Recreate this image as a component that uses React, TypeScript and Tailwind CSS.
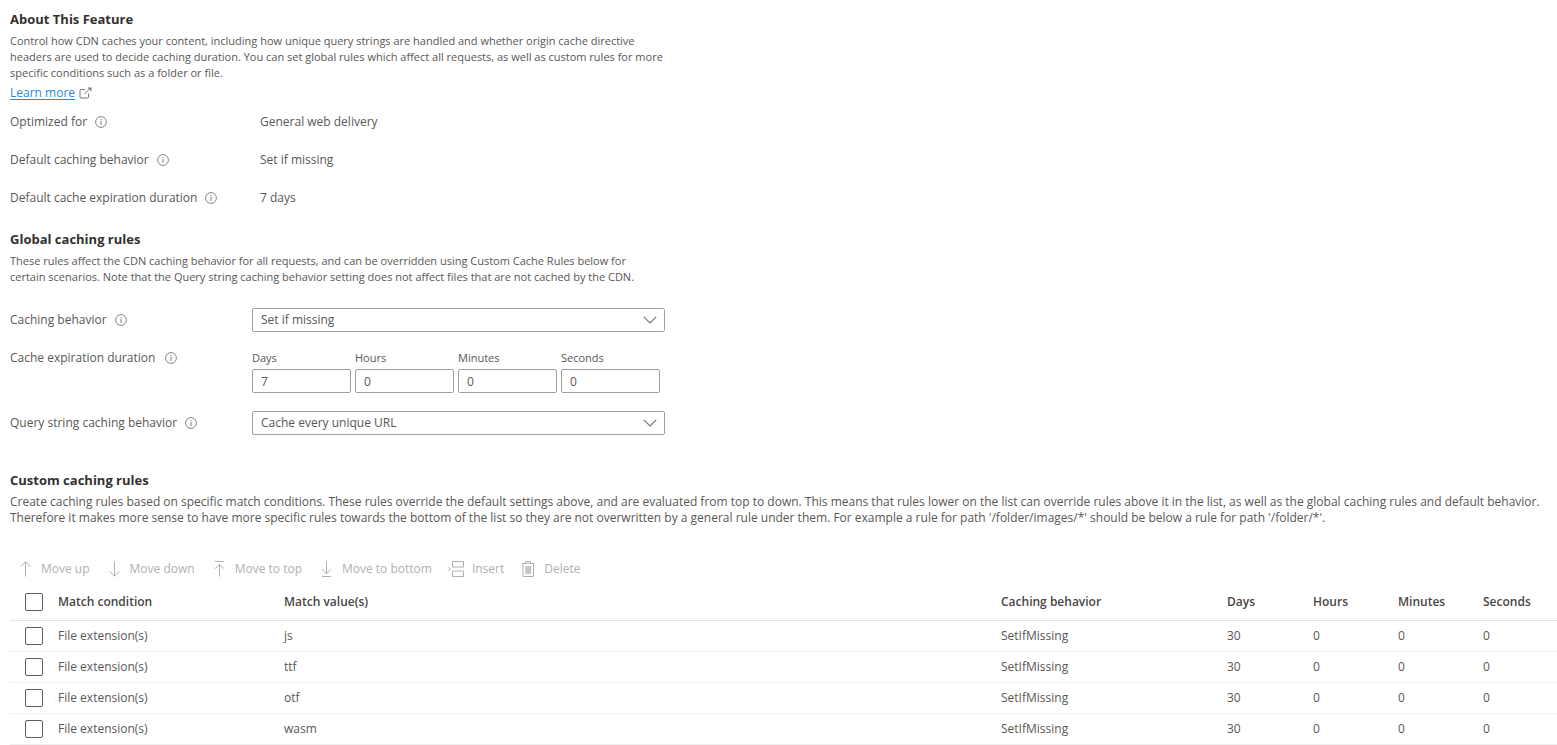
import { useState } from 'react';
import type { ReactNode } from 'react';

const INFO_ROWS = [
  { label: 'Optimized for', value: 'General web delivery' },
  { label: 'Default caching behavior', value: 'Set if missing' },
  { label: 'Default cache expiration duration', value: '7 days' },
];

const RULES = ['js', 'ttf', 'otf', 'wasm'].map((value) => ({
  condition: 'File extension(s)',
  value,
  behavior: 'SetIfMissing',
  days: 30,
  hours: 0,
  minutes: 0,
  seconds: 0,
}));

const DURATION = [
  { id: 'days', label: 'Days', value: '7' },
  { id: 'hours', label: 'Hours', value: '0' },
  { id: 'minutes', label: 'Minutes', value: '0' },
  { id: 'seconds', label: 'Seconds', value: '0' },
];

const ACTIONS = [
  { label: 'Move up', icon: <path d="M8.5 15.5V.8M3.5 5.8l5-5 5 5" /> },
  { label: 'Move down', icon: <path d="M8.5 .5v14.7M3.5 10.2l5 5 5-5" /> },
  { label: 'Move to top', icon: <path d="M4 .5h9M8.5 15.5V3.3M4 7.8l4.5-4.5L13 7.8" /> },
  { label: 'Move to bottom', icon: <path d="M4 15.5h9M8.5 .5v12.2M4 8.2l4.5 4.500L13 8.2" /> },
  { label: 'Insert', icon: <path d="M4.500 .5h11v5.500h-11zM4.500 10h11v5.500h-11zM.5 6l2 2-2 2" /> },
  {
    label: 'Delete',
    icon: (
      <>
        <path d="M2 2.5h12.500M5.500 2.500v-2h5v2M3 2.500v13h10.500v-13" />
        <path d="M5.500 5h5.500v8h-5.500z" fill="#d2d0ce" stroke="none" />
        <path d="M6 5v8M8.250 5v8M10.500 5v8" strokeWidth=".7" />
      </>
    ),
  },
];

export default function App() {
  return (
    <main className="min-h-screen bg-white pt-[9px] pl-[10px] font-['Open_Sans',sans-serif] text-[12px] leading-4 text-[#595755]">
      <section>
        <Heading>About This Feature</Heading>
        <p className="mt-1 max-w-[660px] text-[11px] leading-4">
          Control how CDN caches your content, including how unique query strings are handled and whether origin cache directive headers are used to decide caching duration. You can set global rules which affect all requests, as well as custom rules for more specific conditions such as a folder or file.
        </p>
        <a href="#learn-more" className="mt-0.5 flex h-5 w-fit items-center gap-1 text-[#2b88d8]">
          <span className="underline underline-offset-2">Learn more</span>
          <ExternalIcon />
        </a>
        <dl>
          {INFO_ROWS.map((row) => (
            <div key={row.label} className="flex h-[38px] items-center">
              <dt className="flex w-[250px] items-center gap-2">
                {row.label}
                <InfoIcon />
              </dt>
              <dd>{row.value}</dd>
            </div>
          ))}
        </dl>
      </section>

      <section className="mt-3">
        <Heading>Global caching rules</Heading>
        <p className="mt-1 max-w-[650px] text-[11px] leading-4">
          These rules affect the CDN caching behavior for all requests, and can be overridden using Custom Cache Rules below for certain scenarios. Note that the Query string caching behavior setting does not affect files that are not cached by the CDN.
        </p>
        <div className="mt-4 flex h-[38px] items-center">
          <FieldLabel htmlFor="caching-behavior">Caching behavior</FieldLabel>
          <SelectBox id="caching-behavior" options={['Set if missing', 'Bypass cache', 'Override']} />
        </div>
        <fieldset className="flex pb-[11px]">
          <div className="flex h-[38px] w-[242px] shrink-0 items-center gap-[10px]">
            <span>Cache expiration duration</span>
            <InfoIcon />
          </div>
          <div className="flex gap-1 pt-[9px]">
            {DURATION.map((d) => (
              <div key={d.id} className="flex w-[99px] flex-col">
                <label htmlFor={d.id} className="h-5 text-[11px] leading-5">{d.label}</label>
                <input
                  id={d.id}
                  type="text"
                  defaultValue={d.value}
                  className="mt-px h-6 w-full rounded-xs border border-[#a19f9d] px-2 outline-none"
                />
              </div>
            ))}
          </div>
        </fieldset>
        <div className="flex h-[38px] items-center">
          <FieldLabel htmlFor="query-behavior">Query string caching behavior</FieldLabel>
          <SelectBox id="query-behavior" options={['Cache every unique URL', 'Ignore query strings', 'Bypass caching for query strings']} />
        </div>
      </section>

      <section className="mt-7">
        <Heading>Custom caching rules</Heading>
        <p className="mt-1">
          Create caching rules based on specific match conditions. These rules override the default settings above, and are evaluated from top to down. This means that rules lower on the list can override rules above it in the list, as well as the global caching rules and default behavior. Therefore it makes more sense to have more specific rules towards the bottom of the list so they are not overwritten by a general rule under them. For example a rule for path '/folder/images/*' should be below a rule for path '/folder/*'.
        </p>
        <div role="toolbar" aria-label="Rule actions" className="mt-[27px] flex h-8 items-center gap-4 pl-[7px] text-[#b3b0ad]">
          {ACTIONS.map((a) => (
            <button key={a.label} type="button" disabled className="flex items-center gap-2">
              <svg width="16" height="16" viewBox="0 0 16 16" fill="none" stroke="currentColor" aria-hidden="true">
                {a.icon}
              </svg>
              {a.label}
            </button>
          ))}
        </div>
        <RulesTable />
      </section>
    </main>
  );
}

function RulesTable() {
  const [selected, setSelected] = useState<string[]>([]);
  const allSelected = selected.length === RULES.length;

  const toggle = (value: string) => {
    setSelected((prev) => (prev.includes(value) ? prev.filter((v) => v !== value) : [...prev, value]));
  };

  return (
    <table className="w-full table-fixed border-collapse text-left">
      <colgroup>
        <col className="w-12" />
        <col className="w-[226px]" />
        <col />
        <col className="w-[226px]" />
        <col className="w-[86px]" />
        <col className="w-[85px]" />
        <col className="w-[85px]" />
        <col className="w-[74px]" />
      </colgroup>
      <thead>
        <tr className="h-[35px] border-b border-[#e5e3e1] text-[#484644]">
          <th className="pl-[15px]">
            <Tick label="Select all rules" checked={allSelected} onChange={() => setSelected(allSelected ? [] : RULES.map((r) => r.value))} />
          </th>
          {['Match condition', 'Match value(s)', 'Caching behavior', 'Days', 'Hours', 'Minutes', 'Seconds'].map((h) => (
            <th key={h} className="font-semibold">{h}</th>
          ))}
        </tr>
      </thead>
      <tbody>
        {RULES.map((r) => (
          <tr key={r.value} className="h-[31px] border-b border-[#f0efee]">
            <td className="pl-[15px]">
              <Tick label={`Select rule ${r.value}`} checked={selected.includes(r.value)} onChange={() => toggle(r.value)} />
            </td>
            <td>{r.condition}</td>
            <td>{r.value}</td>
            <td>{r.behavior}</td>
            <td>{r.days}</td>
            <td>{r.hours}</td>
            <td>{r.minutes}</td>
            <td>{r.seconds}</td>
          </tr>
        ))}
      </tbody>
    </table>
  );
}

function Tick({ label, checked, onChange }: { label: string; checked: boolean; onChange: () => void }) {
  return (
    <input
      type="checkbox"
      aria-label={label}
      checked={checked}
      onChange={onChange}
      className="block size-[18px] appearance-none rounded-xs border border-[#605e5c] bg-white checked:bg-[#0078d4]"
    />
  );
}

function Heading({ children }: { children: ReactNode }) {
  return <h2 className="text-[13px] leading-5 font-bold text-[#323130]">{children}</h2>;
}

function FieldLabel({ htmlFor, children }: { htmlFor: string; children: ReactNode }) {
  return (
    <div className="flex w-[242px] shrink-0 items-center gap-2">
      <label htmlFor={htmlFor}>{children}</label>
      <InfoIcon />
    </div>
  );
}

function SelectBox({ id, options }: { id: string; options: string[] }) {
  return (
    <div className="relative w-[413px]">
      <select id={id} className="block h-6 w-full appearance-none rounded-xs border border-[#a19f9d] bg-white px-2 outline-none">
        {options.map((o) => (
          <option key={o}>{o}</option>
        ))}
      </select>
      <svg className="pointer-events-none absolute top-2 right-2" width="14" height="8" viewBox="0 0 14 8" fill="none" stroke="#797775" strokeWidth="1.2" aria-hidden="true">
        <path d="M.8 .8 7 7 13.2 .8" />
      </svg>
    </div>
  );
}

function InfoIcon() {
  return (
    <svg width="12" height="12" viewBox="0 0 12 12" fill="none" stroke="#797775" aria-hidden="true">
      <circle cx="6" cy="6" r="5.4" strokeWidth=".9" />
      <path d="M6 5v3.8M6 3v1.2" />
    </svg>
  );
}

function ExternalIcon() {
  return (
    <svg width="13" height="13" viewBox="0 0 13 13" fill="none" stroke="#797775" aria-hidden="true">
      <path d="M6 2.5H2q-1 0-1 1v6.500q0 1 1 1h6.500q1 0 1-1V6.500M5.500 7l5.500-5.500" />
      <path d="M8.500 .5h4v4z" fill="#797775" stroke="none" />
    </svg>
  );
}
